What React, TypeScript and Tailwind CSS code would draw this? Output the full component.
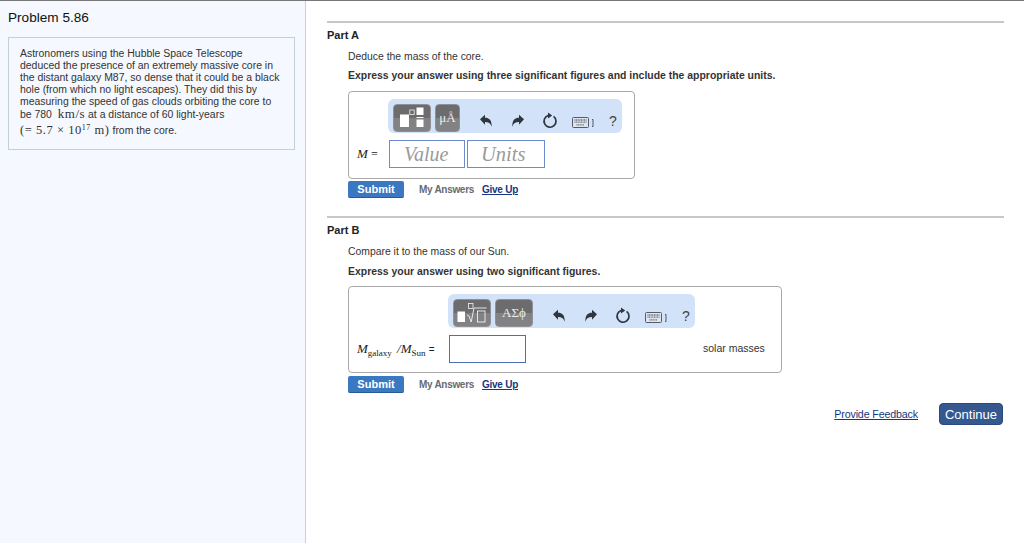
import React from 'react';

const serif = "font-['Liberation_Serif',serif]";

const UndoIcon: React.FC<{ flip?: boolean }> = ({ flip }) => (
  <svg width="14" height="14" viewBox="0 0 14 14" className={flip ? '-scale-x-100' : ''}>
    <path d="M1 5.2 6 .8v2.9c4.2 0 7 2.6 6.6 9-1-3.4-3-4.8-6.6-4.8v2.8z" fill="#2f3640" />
  </svg>
);

const RefreshIcon: React.FC = () => (
  <svg width="16" height="17" viewBox="0 0 16 17">
    <path d="M11.6 4.4a6 6 0 1 1-5.4-.9" fill="none" stroke="#2f3640" strokeWidth="1.7" />
    <path d="M6 .4v6.2l4.2-3.1z" fill="#2f3640" />
  </svg>
);

const KeyboardIcon: React.FC = () => (
  <svg width="22" height="11" viewBox="0 0 22 11">
    <rect x="0.5" y="0.5" width="16" height="10" rx="1" fill="#dfe5ee" stroke="#555b66" />
    <path d="M2.5 3h12M2.5 5.2h12M4.5 7.8h8" stroke="#666c76" strokeWidth="1.3" strokeDasharray="1 .6" />
    <path d="M20 2.5h1v7h-1" fill="none" stroke="#444a55" strokeWidth="0.9" />
  </svg>
);

const ToolButton: React.FC<{ className: string; children: React.ReactNode }> = ({ className, children }) => (
  <div className={`relative h-[28px] mt-[3px] rounded-[4px] bg-[linear-gradient(#6c6c6e_0,#6c6c6e_50%,#828285_50%,#828285_100%)] border border-[#8e9094] flex items-center justify-center overflow-hidden ${className}`}>
    {children}
  </div>
);

const TemplatesIcon: React.FC = () => (
  <svg width="24" height="22" viewBox="0 0 24 22">
    <rect x="0" y="7.5" width="9" height="12.5" fill="#fff" />
    <rect x="9.8" y="3" width="4.4" height="4.5" fill="none" stroke="#f2f2f2" strokeWidth="0.8" />
    <rect x="16.5" y="0.5" width="7" height="7.5" fill="#fff" />
    <rect x="16.5" y="10" width="7" height="1" fill="#fff" />
    <rect x="16.5" y="12.5" width="7" height="7.5" fill="#fff" />
  </svg>
);

const RootIcon: React.FC = () => (
  <svg width="30" height="22" viewBox="0 0 30 22">
    <rect x="0.5" y="9.5" width="7.5" height="10.5" fill="#fff" />
    <rect x="11.5" y="1.5" width="4.5" height="5" fill="none" stroke="#f2f2f2" strokeWidth="0.8" />
    <path d="M10 13l2 1 2.2 6 2.8-14h12.5" fill="none" stroke="#f2f2f2" strokeWidth="0.9" />
    <rect x="20.5" y="9" width="7.5" height="11" fill="none" stroke="#f2f2f2" strokeWidth="0.9" />
  </svg>
);

const Toolbar: React.FC<{ first: React.ReactNode; second: React.ReactNode; secondWidth: string; className: string }> = ({ first, second, secondWidth, className }) => (
  <div className={`h-[34px] bg-[#d2e2f8] rounded-[6px] flex items-center pl-[5px] ${className}`}>
    <ToolButton className="w-[38px]">{first}</ToolButton>
    <ToolButton className={`ml-[4px] ${secondWidth}`}>{second}</ToolButton>
    <div className="flex items-center mt-[9px]">
      <div className="ml-[19px] w-[14px] flex"><UndoIcon /></div>
      <div className="ml-[18px] w-[14px] flex"><UndoIcon flip /></div>
      <div className="ml-[17px] w-[16px] flex"><RefreshIcon /></div>
      <div className="ml-[14px] w-[22px] flex mt-[3px]"><KeyboardIcon /></div>
      <span className="ml-[15px] text-[14px] leading-none text-[#444]">?</span>
    </div>
  </div>
);

const SubmitRow: React.FC = () => (
  <div className="flex items-center mt-[2px] h-[17px]">
    <button className="w-[56px] h-[17px] rounded-[2px] bg-[#3a78c2] border-b border-[#2a5a96] text-white text-[11px] font-bold leading-none">Submit</button>
    <span className="ml-[15px] text-[10px] tracking-[-0.3px] font-bold text-[#666b73]">My Answers</span>
    <a className="ml-[8px] text-[10px] tracking-[-0.25px] font-bold text-[#17367f] underline">Give Up</a>
  </div>
);

const PartHeader: React.FC<{ title: string; prompt: string; instruction: string; gap: string }> = ({ title, prompt, instruction, gap }) => (
  <>
    <div className="h-[2px] bg-[#c8c8c8]" />
    <h3 className="mt-[5px] h-[14px] leading-[14px] text-[11px] font-bold text-[#222]">{title}</h3>
    <p className="mt-[8px] pl-[21px] h-[13px] leading-[13px] text-[10.4px] text-[#333]">{prompt}</p>
    <p className={`${gap} pl-[21px] h-[13px] leading-[13px] text-[10.45px] font-bold text-[#333] whitespace-nowrap`}>{instruction}</p>
  </>
);

const App: React.FC = () => {
  return (
    <div className="w-[1024px] h-[543px] overflow-hidden bg-white flex border-t border-[#777] font-['Liberation_Sans',sans-serif] antialiased">
      {/* Problem panel */}
      <aside className="w-[306px] shrink-0 h-full bg-[#f5f8fe] border-r border-[#c6cfdb] pl-[8px] pr-[10px]">
        <h1 className="mt-[8px] h-[17px] leading-[17px] text-[13.6px] text-[#111]">Problem 5.86</h1>
        <div className="mt-[11px] w-[287px] h-[113px] border border-[#c4cfdc] pl-[11px] pt-[10px] text-[10.45px] leading-[12.1px] text-[#333]">
          <p className="whitespace-nowrap">Astronomers using the Hubble Space Telescope</p>
          <p className="whitespace-nowrap">deduced the presence of an extremely massive core in</p>
          <p className="whitespace-nowrap">the distant galaxy M87, so dense that it could be a black</p>
          <p className="whitespace-nowrap">hole (from which no light escapes). They did this by</p>
          <p className="whitespace-nowrap">measuring the speed of gas clouds orbiting the core to</p>
          <p className="whitespace-nowrap">be 780 <span className={`${serif} text-[13px] tracking-[0.5px] ml-[3px]`}>km/s</span> at a distance of 60 light-years</p>
          <p className="whitespace-nowrap mt-[2px]">
            <span className={`${serif} text-[12.5px] tracking-[0.55px]`}>(= 5.7 × 10<sup className="text-[8px]">17</sup> m)</span> from the core.
          </p>
        </div>
      </aside>

      {/* Parts */}
      <main className="flex-1 pl-[21px] pr-[20px] pt-[20px]">
        <section>
          <PartHeader
            title="Part A"
            prompt="Deduce the mass of the core."
            instruction="Express your answer using three significant figures and include the appropriate units."
            gap="mt-[6px]"
          />
          <div className="mt-[9px] ml-[21px] w-[287px] h-[88px] border border-[#a9a9a9] rounded-[4px] pt-[7px] pl-[8px]">
            <Toolbar
              className="ml-[31px] w-[234px]"
              first={<TemplatesIcon />}
              second={<span className={`${serif} text-[13px] text-[#eee] leading-none`}>μÅ</span>}
              secondWidth="w-[25px]"
            />
            <div className="flex items-center mt-[7px]">
              <span className={`${serif} italic text-[13px] text-[#222] w-[32px]`}>M <span className="not-italic text-[12px]">=</span></span>
              <div className={`w-[76px] h-[28px] border border-[#6d8bd0] flex items-center pl-[14px] ${serif} italic text-[20px] text-[#9a9a9a]`}>Value</div>
              <div className={`ml-[2px] w-[78px] h-[28px] border border-[#6d8bd0] flex items-center pl-[13px] ${serif} italic text-[20.5px] text-[#9a9a9a]`}>Units</div>
            </div>
          </div>
          <div className="ml-[21px]"><SubmitRow /></div>
        </section>

        <section className="mt-[18px]">
          <PartHeader
            title="Part B"
            prompt="Compare it to the mass of our Sun."
            instruction="Express your answer using two significant figures."
            gap="mt-[7px]"
          />
          <div className="mt-[8px] ml-[21px] w-[434px] h-[87px] border border-[#a9a9a9] rounded-[4px] pt-[7px] pl-[8px]">
            <Toolbar
              className="ml-[91px] w-[247px]"
              first={<RootIcon />}
              second={<span className={`${serif} text-[13px] text-[#eee] leading-none`}>ΑΣϕ</span>}
              secondWidth="w-[38px]"
            />
            <div className="flex items-center mt-[7px]">
              <span className={`${serif} text-[13px] text-[#222] w-[92px] whitespace-nowrap`}>
                <i>M</i><sub className="text-[9px]">galaxy</sub> <i className="ml-[2px]">/</i><i>M</i><sub className="text-[9px]">Sun</sub> <span className="font-['Liberation_Sans',sans-serif] text-[10px]">=</span>
              </span>
              <div className="w-[77px] h-[28px] border border-[#4d6fb8]" />
              <span className="ml-[177px] text-[10.5px] text-[#333]">solar masses</span>
            </div>
          </div>
          <div className="ml-[21px] pt-[1px]"><SubmitRow /></div>
        </section>

        <div className="mt-[10px] mr-[1px] flex items-center justify-end">
          <a className="pt-[1px] text-[10.7px] tracking-[-0.15px] text-[#17367f] underline">Provide Feedback</a>
          <button className="ml-[21px] w-[64px] h-[22px] rounded-[4px] bg-[#34588f] border border-[#2b4a7c] text-white text-[13px] leading-none">Continue</button>
        </div>
      </main>
    </div>
  );
};

export default App;
